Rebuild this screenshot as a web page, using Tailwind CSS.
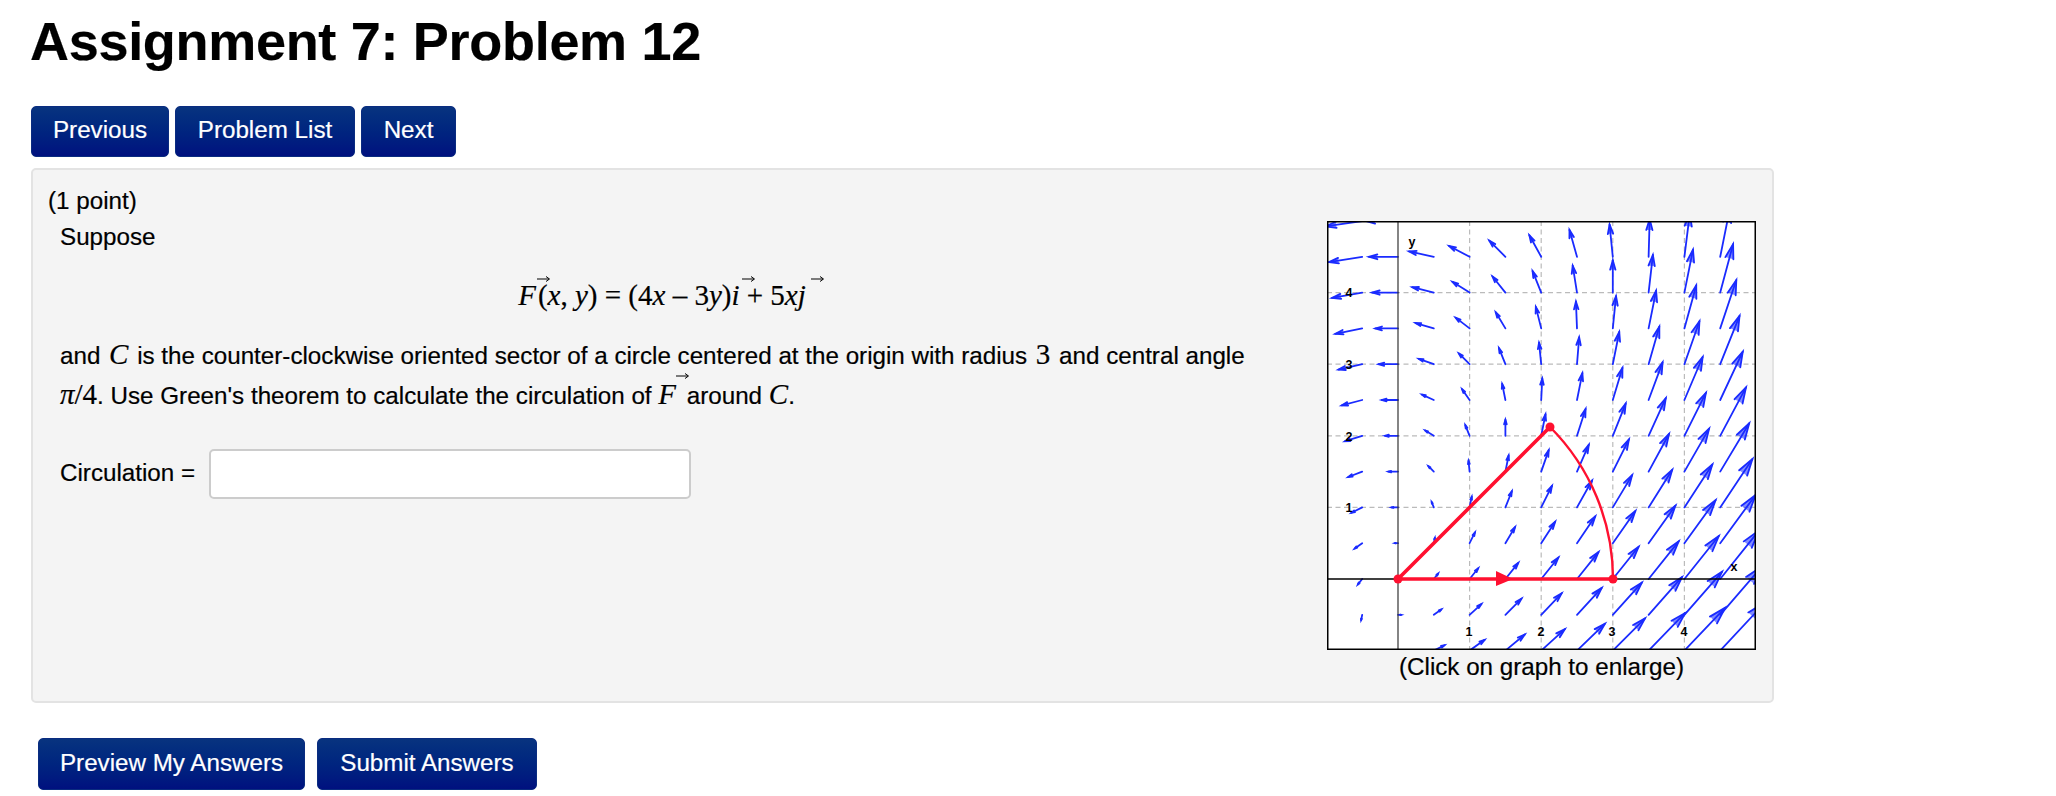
<!DOCTYPE html>
<html lang="en">
<head>
    <meta charset="UTF-8">
    <title>Assignment 7: Problem 12</title>
    <script src="https://cdn.jsdelivr.net/npm/@tailwindcss/browser@4"></script>
</head>
<body class="bg-white text-black font-['Liberation_Sans',sans-serif] text-[24.2px] [-webkit-text-stroke:0.2px] overflow-hidden">
    <h1 class="ml-[30px] pt-[11px] h-[106px] font-bold text-[54px] tracking-[-0.3px] leading-[60px]">Assignment 7: Problem 12</h1>

    <!-- Problem nav -->
    <div class="ml-[31px] flex gap-[6px]">
        <a href="#" class="h-[51px] w-[138px] pb-[2px] flex items-center justify-center rounded-[5px] border border-[#0a2c80] bg-linear-to-b from-[#08337f] to-[#00107f] text-white">Previous</a>
        <a href="#" class="h-[51px] w-[180px] pb-[2px] flex items-center justify-center rounded-[5px] border border-[#0a2c80] bg-linear-to-b from-[#08337f] to-[#00107f] text-white">Problem List</a>
        <a href="#" class="h-[51px] w-[95px] pb-[2px] flex items-center justify-center rounded-[5px] border border-[#0a2c80] bg-linear-to-b from-[#08337f] to-[#00107f] text-white">Next</a>
    </div>

    <!-- Problem panel -->
    <div class="ml-[31px] mt-[11px] w-[1743px] h-[535px] flex rounded-[5px] border-2 border-[#e3e3e3] bg-[#f4f4f4]">
        <div class="w-[1249px] pt-[13px]">
            <div class="ml-[15px] leading-[36px]">(1 point)</div>
            <div class="ml-[27px] w-[1222px]">
                <div class="leading-[36px]">Suppose</div>

                <div class="mt-[20px] h-[40px] leading-[40px] text-center font-['Liberation_Serif',serif] text-[29px]">
                    <span class="relative italic">F<svg class="absolute left-[19px] -top-[4px]" width="13" height="8" viewBox="0 0 13 8"><path d="M0 4H12M9 1.5L12.5 4L9 6.5" fill="none" stroke="#000" stroke-width="1"/></svg></span><span class="ml-[2px]">(<i>x</i>, <i>y</i>) = (4<i>x</i> – 3<i>y</i>)</span><span class="relative italic">i<svg class="absolute left-[11px] -top-[4px]" width="13" height="8" viewBox="0 0 13 8"><path d="M0 4H12M9 1.5L12.5 4L9 6.5" fill="none" stroke="#000" stroke-width="1"/></svg></span> + 5<i>x</i><span class="relative italic pr-[18px]">j<svg class="absolute left-[13px] -top-[4px]" width="13" height="8" viewBox="0 0 13 8"><path d="M0 4H12M9 1.5L12.5 4L9 6.5" fill="none" stroke="#000" stroke-width="1"/></svg></span>
                </div>

                <div class="mt-[21px] leading-[40px]">
                    and <i class="mx-[2px] font-['Liberation_Serif',serif] text-[29px] leading-none">C</i> is the counter-clockwise oriented sector of a circle centered at the origin with radius <span class="mx-[2px] font-['Liberation_Serif',serif] text-[29px] leading-none">3</span> and central angle<br>
                    <span class="font-['Liberation_Serif',serif] text-[29px] leading-none"><i>π</i>/4</span>. Use Green's theorem to calculate the circulation of <span class="relative font-['Liberation_Serif',serif] italic text-[29px] leading-none pr-[4px]">F<svg class="absolute left-[18px] -top-[6px]" width="13" height="8" viewBox="0 0 13 8"><path d="M0 4H12M9 1.5L12.5 4L9 6.5" fill="none" stroke="#000" stroke-width="1"/></svg></span> around <i class="font-['Liberation_Serif',serif] text-[29px] leading-none">C</i>.
                </div>

                <div class="mt-[33px] flex items-center gap-[14px]">
                    <label for="answer" class="mb-[2px]">Circulation =</label>
                    <input id="answer" type="text" class="w-[482px] h-[50px] rounded-[5px] border-2 border-[#cccccc] bg-white">
                </div>
            </div>
        </div>

        <!-- Vector field graph -->
        <div class="ml-auto mr-[16px] mt-[51px] w-[429px]">
            <svg id="graph" width="429" height="429" viewBox="0 0 429 429" class="block bg-white [-webkit-text-stroke:0]">
                <g id="grid" fill="none" stroke="#bbbbbb" stroke-width="1.2" stroke-dasharray="5 3.5"></g>
                <g id="field" fill="#1a2bff" fill-opacity="0.55" stroke="#1a2bff" stroke-width="1.8" stroke-linecap="round"></g>
                <line x1="0" y1="358" x2="429" y2="358" stroke="#000" stroke-width="1.3"/>
                <line x1="71" y1="0" x2="71" y2="429" stroke="#333" stroke-width="1.2"/>
                <g class="font-bold text-[12.5px]" text-anchor="middle" fill="#000">
                    <text x="85" y="25">y</text>
                    <text x="22" y="76">4</text>
                    <text x="22" y="148">3</text>
                    <text x="22" y="220">2</text>
                    <text x="22" y="291">1</text>
                    <text x="142" y="415">1</text>
                    <text x="214" y="415">2</text>
                    <text x="285" y="415">3</text>
                    <text x="357" y="415">4</text>
                    <text x="407" y="350">x</text>
                </g>
                <!-- sector C -->
                <path d="M286 358L71 358L223 206" fill="none" stroke="#ff1030" stroke-width="3.6" stroke-linejoin="round"/>
                <path d="M223 206A215 215 0 0 1 286 358" fill="none" stroke="#ff1030" stroke-width="2.4"/>
                <path d="M169 350L186 358L169 365Z" fill="#ff1030"/>
                <circle cx="71" cy="358" r="4.5" fill="#ff1030"/>
                <circle cx="286" cy="358" r="4.5" fill="#ff1030"/>
                <circle cx="223" cy="206" r="4.5" fill="#ff1030"/>
                <rect x="0.75" y="0.75" width="427.5" height="427.5" fill="none" stroke="#000" stroke-width="1.5"/>
            </svg>
            <div class="mt-[2px] text-center leading-[30px]">(Click on graph to enlarge)</div>
        </div>
    </div>

    <div class="ml-[38px] mt-[35px] flex gap-[12px]">
        <button class="h-[52px] w-[267px] pb-[2px] rounded-[5px] border border-[#0a2c80] bg-linear-to-b from-[#08337f] to-[#00107f] text-white">Preview My Answers</button>
        <button class="h-[52px] w-[220px] pb-[2px] rounded-[5px] border border-[#0a2c80] bg-linear-to-b from-[#08337f] to-[#00107f] text-white">Submit Answers</button>
    </div>

<script>
    // F(x, y) = (4x - 3y, 5x), drawn on the same axes as the png the page came from
    const NS = 'http://www.w3.org/2000/svg';
    const ox = 71, oy = 358, unit = 71.6, scale = 2.15;

    function addPath(parent, d) {
        const p = document.createElementNS(NS, 'path');
        p.setAttribute('d', d);
        parent.appendChild(p);
    }

    const grid = document.getElementById('grid');
    for (let i = 1; i <= 4; i++) {
        addPath(grid, `M${ox + i * unit} 0V429`);
        addPath(grid, `M0 ${oy - i * unit}H429`);
    }

    const field = document.getElementById('field');
    for (let x = -1; x <= 5; x += 0.5) {
        for (let y = -1; y <= 5; y += 0.5) {
            const fx = (4 * x - 3 * y) * scale;
            const fy = 5 * x * scale;
            const len = Math.hypot(fx, fy);
            if (len < 1) continue;
            const x0 = ox + x * unit, y0 = oy - y * unit;
            const x1 = x0 + fx, y1 = y0 - fy;
            const ang = Math.atan2(-fy, fx);
            const barb = 0.3 * len;
            const spread = 0.28;
            const ax = x1 - barb * Math.cos(ang - spread), ay = y1 - barb * Math.sin(ang - spread);
            const bx = x1 - barb * Math.cos(ang + spread), by = y1 - barb * Math.sin(ang + spread);
            // shaft first, then the head as its own closed shape
            addPath(field, `M${x0} ${y0}L${x1} ${y1}`);
            addPath(field, `M${ax} ${ay}L${x1} ${y1}L${bx} ${by}`);
        }
    }
</script>
</body>
</html>
